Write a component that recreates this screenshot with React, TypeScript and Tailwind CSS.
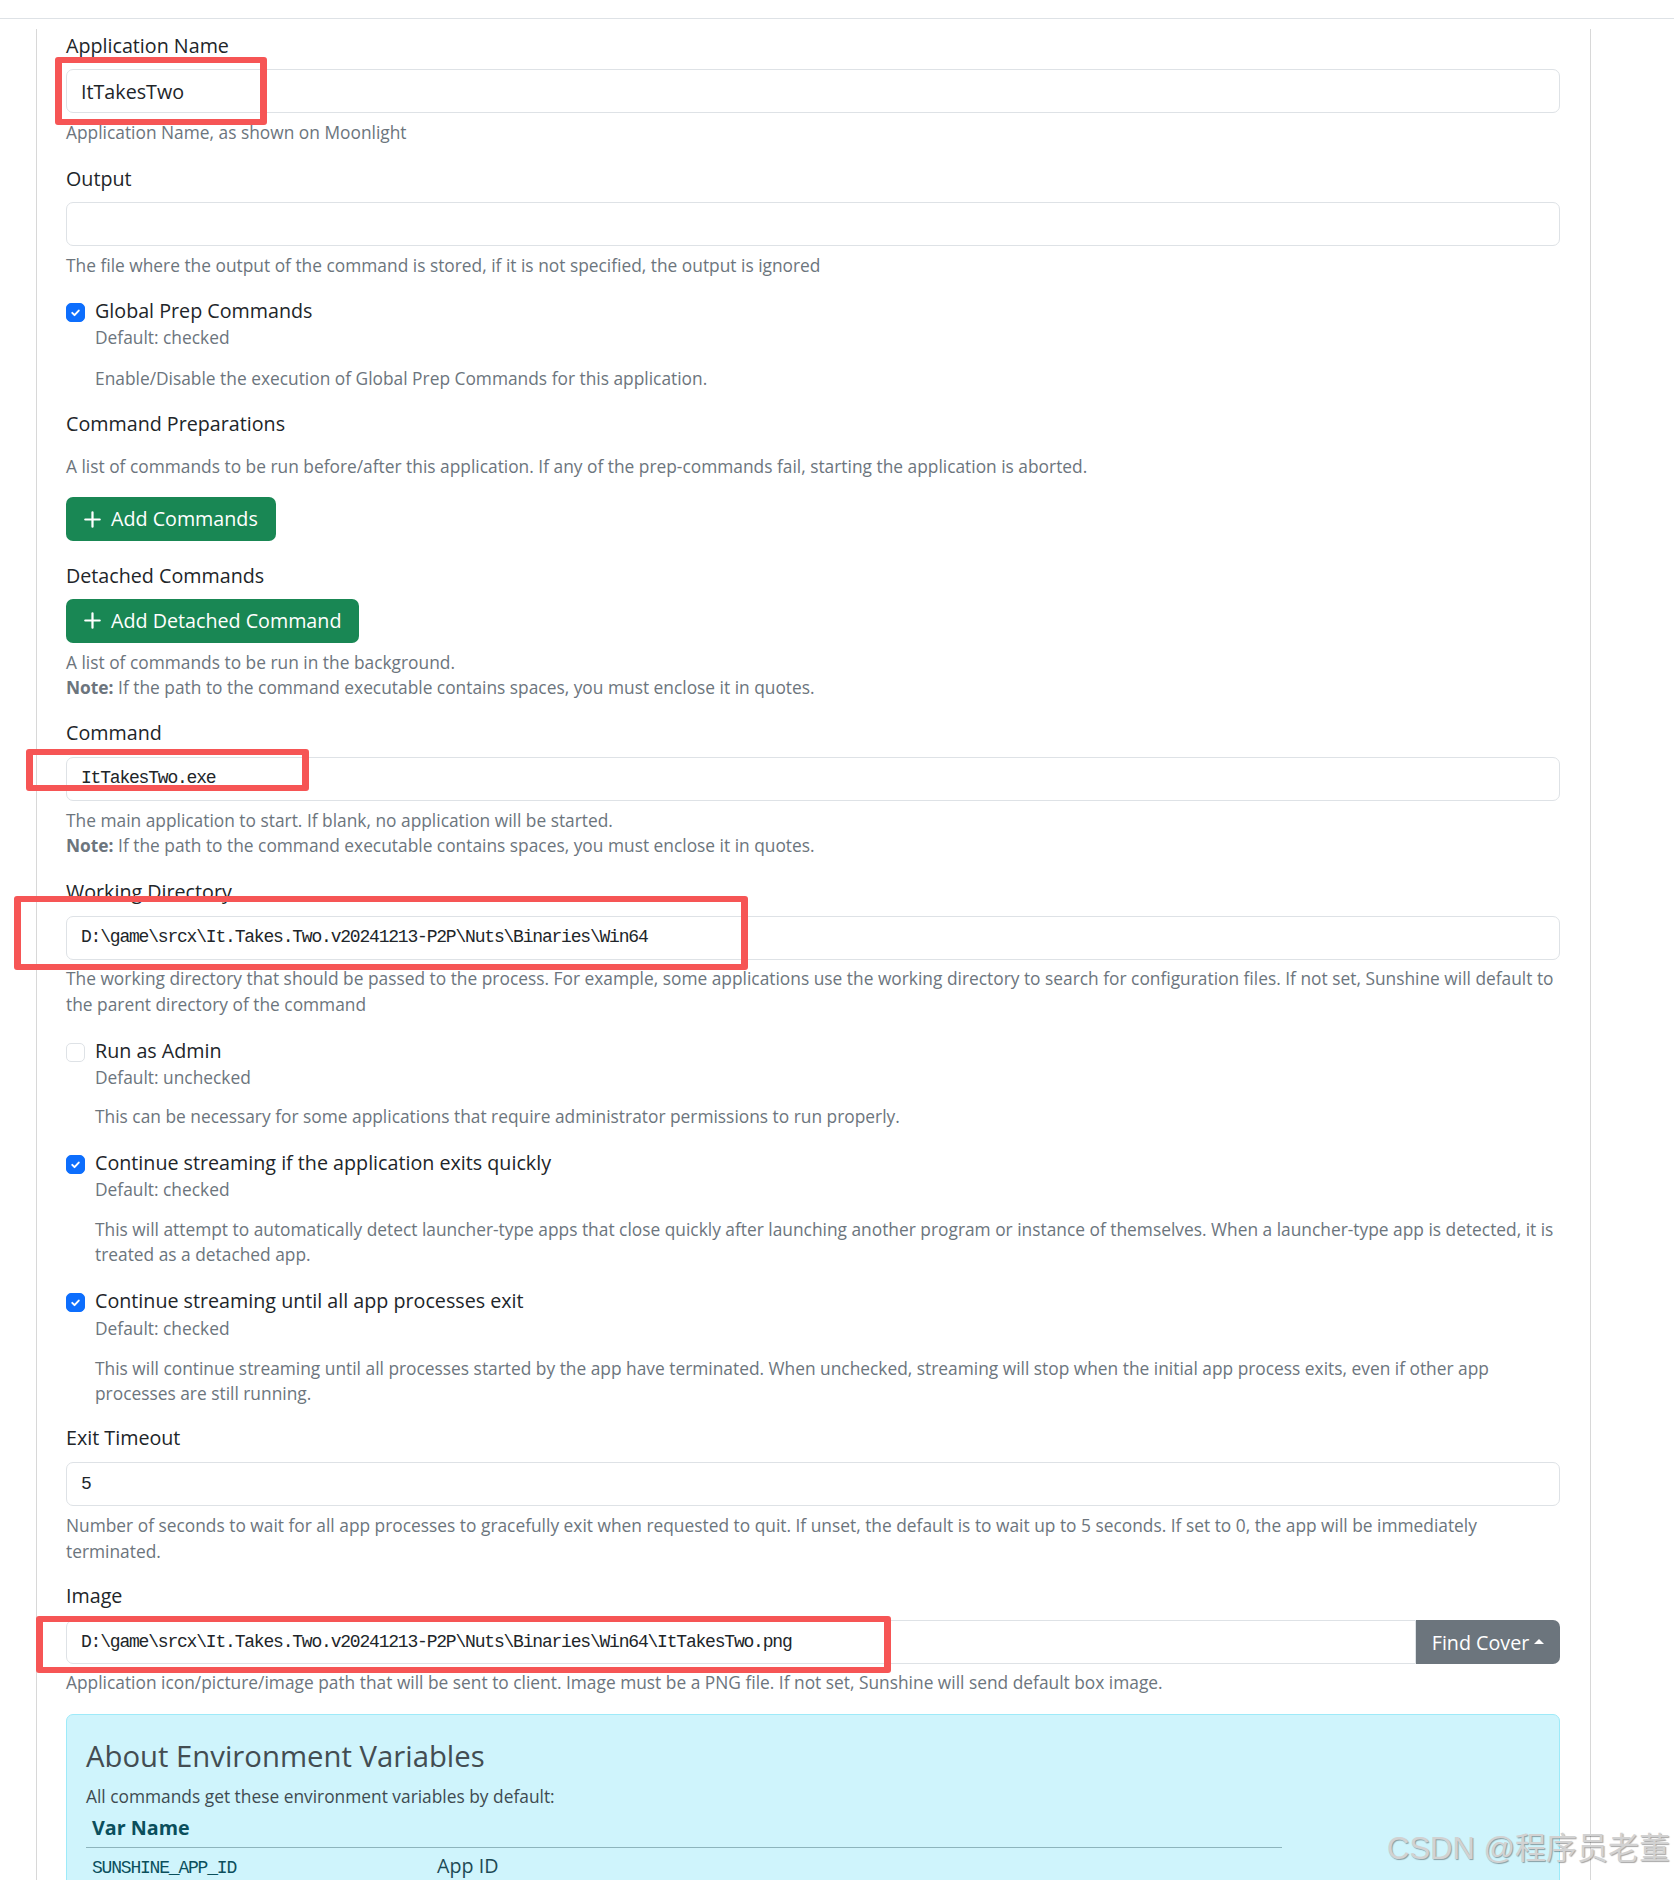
import React from "react";

function Label({ className = "", children }: { className?: string; children: React.ReactNode }) {
  return (
    <div className={`pt-[2.4px] -mb-[2.4px] text-[19.7px] leading-[28.8px] text-[#212529] whitespace-nowrap ${className}`}>
      {children}
    </div>
  );
}

function Help({ className = "", children }: { className?: string; children: React.ReactNode }) {
  return (
    <div className={`pt-[1.6px] -mb-[1.6px] text-[17.35px] leading-[25.2px] text-[#6c757d] whitespace-nowrap ${className}`}>
      {children}
    </div>
  );
}

function Field({ className = "", mono = false, value = "" }: { className?: string; mono?: boolean; value?: string }) {
  return (
    <div
      className={`h-[44px] rounded-[7px] border border-[#dee2e6] bg-white px-[14px] flex items-center text-[#212529] whitespace-nowrap ${
        mono ? "font-['Liberation_Mono',monospace] text-[18px] tracking-[-1.2px]" : "text-[19.7px]"
      } ${className}`}
    >
      {value}
    </div>
  );
}

function Check({ checked }: { checked: boolean }) {
  return (
    <span
      className={`mt-[8.4px] w-[19px] h-[19px] shrink-0 rounded-[5px] border flex items-center justify-center ${
        checked ? "bg-[#0d6efd] border-[#0d6efd]" : "bg-white border-[#dee2e6]"
      }`}
    >
      {checked && (
        <svg width="13" height="13" viewBox="0 0 20 20" fill="none">
          <path d="M5 10.5l3.5 3.5L15 7" stroke="white" strokeWidth="3" strokeLinecap="round" strokeLinejoin="round" />
        </svg>
      )}
    </span>
  );
}

function Plus() {
  return (
    <svg width="17" height="17" viewBox="0 0 16 16" fill="none">
      <path d="M8 1.2v13.6M1.2 8h13.6" stroke="white" strokeWidth="2.1" strokeLinecap="round" />
    </svg>
  );
}

function GreenButton({ className = "", children }: { className?: string; children: React.ReactNode }) {
  return (
    <div className={`inline-flex items-center h-[44px] rounded-[7px] bg-[#198754] text-white text-[19.7px] pl-[18px] pr-[18px] gap-[10px] whitespace-nowrap ${className}`}>
      <Plus />
      <span>{children}</span>
    </div>
  );
}

function RedBox({ className = "" }: { className?: string }) {
  return <div className={`absolute border-x-[7px] border-y-[6px] border-[#f65555] rounded-[3px] pointer-events-none ${className}`} />;
}

export default function App() {
  return (
    <div className="relative w-[1674px] h-[1880px] overflow-hidden bg-white font-['Open_Sans',sans-serif]">
      <div className="h-[19px] border-b border-[#dee2e6]" />
      <div className="ml-[36px] w-[1555px] h-[1900px] border-x border-[#d8d8d8] pl-[29px] pr-[30px]">
        <Label className="mt-[10.3px]">Application Name</Label>
        <Field className="mt-[11.2px]" value="ItTakesTwo" />
        <Help className="mt-[5.4px]">Application Name, as shown on Moonlight</Help>

        <Label className="mt-[19.1px]">Output</Label>
        <Field className="mt-[10.2px]" />
        <Help className="mt-[5.7px]">The file where the output of the command is stored, if it is not specified, the output is ignored</Help>

        <div className="mt-[17.8px] flex items-start gap-[10px]">
          <Check checked />
          <Label>Global Prep Commands</Label>
        </div>
        <div className="pl-[29px]">
          <Help>Default: checked</Help>
          <Help className="mt-[15.8px]">Enable/Disable the execution of Global Prep Commands for this application.</Help>
        </div>

        <Label className="mt-[18.1px]">Command Preparations</Label>
        <Help className="mt-[15.6px]">
          A list of commands to be run before/after this application. If any of the prep-commands fail, starting the application is aborted.
        </Help>
        <div className="mt-[19.7px]">
          <GreenButton className="h-[44.4px]">Add Commands</GreenButton>
        </div>

        <Label className="mt-[18.6px]">Detached Commands</Label>
        <div className="mt-[10.2px]">
          <GreenButton>Add Detached Command</GreenButton>
        </div>
        <Help className="mt-[5.4px]">
          A list of commands to be run in the background.
          <br />
          <b className="font-bold">Note:</b> If the path to the command executable contains spaces, you must enclose it in quotes.
        </Help>

        <Label className="mt-[18.2px]">Command</Label>
        <Field className="mt-[11.2px]" mono value="ItTakesTwo.exe" />
        <Help className="mt-[5.4px]">
          The main application to start. If blank, no application will be started.
          <br />
          <b className="font-bold">Note:</b> If the path to the command executable contains spaces, you must enclose it in quotes.
        </Help>

        <Label className="mt-[18.8px]">Working Directory</Label>
        <Field className="mt-[11.9px] h-[44.3px]" mono value="D:\game\srcx\It.Takes.Two.v20241213-P2P\Nuts\Binaries\Win64" />
        <Help className="mt-[5.0px]">
          The working directory that should be passed to the process. For example, some applications use the working directory to search for configuration files. If not set, Sunshine will default to
          <br />
          the parent directory of the command
        </Help>

        <div className="mt-[18.9px] flex items-start gap-[10px]">
          <Check checked={false} />
          <Label>Run as Admin</Label>
        </div>
        <div className="pl-[29px]">
          <Help>Default: unchecked</Help>
          <Help className="mt-[14.2px]">This can be necessary for some applications that require administrator permissions to run properly.</Help>
        </div>

        <div className="mt-[18.7px] flex items-start gap-[10px]">
          <Check checked />
          <Label>Continue streaming if the application exits quickly</Label>
        </div>
        <div className="pl-[29px]">
          <Help className="mt-[0.6px]">Default: checked</Help>
          <Help className="mt-[14.8px]">
            This will attempt to automatically detect launcher-type apps that close quickly after launching another program or instance of themselves. When a launcher-type app is detected, it is
            <br />
            treated as a detached app.
          </Help>
        </div>

        <div className="mt-[18.6px] flex items-start gap-[10px]">
          <Check checked />
          <Label>Continue streaming until all app processes exit</Label>
        </div>
        <div className="pl-[29px]">
          <Help className="mt-[0.5px]">Default: checked</Help>
          <Help className="mt-[14.8px]">
            This will continue streaming until all processes started by the app have terminated. When unchecked, streaming will stop when the initial app process exits, even if other app
            <br />
            processes are still running.
          </Help>
        </div>

        <Label className="mt-[16.9px]">Exit Timeout</Label>
        <Field className="mt-[12.2px] h-[44.4px]" mono value="5" />
        <Help className="mt-[5.7px]">
          Number of seconds to wait for all app processes to gracefully exit when requested to quit. If unset, the default is to wait up to 5 seconds. If set to 0, the app will be immediately
          <br />
          terminated.
        </Help>

        <Label className="mt-[16.9px]">Image</Label>
        <div className="mt-[12.2px] flex h-[44.3px]">
          <div className="flex-1 h-full rounded-l-[7px] border border-[#dee2e6] bg-white px-[14px] flex items-center text-[#212529] font-['Liberation_Mono',monospace] text-[18px] tracking-[-1.2px] whitespace-nowrap">
            D:\game\srcx\It.Takes.Two.v20241213-P2P\Nuts\Binaries\Win64\ItTakesTwo.png
          </div>
          <div className="w-[144px] h-full rounded-r-[7px] bg-[#6c757d] text-white text-[19.7px] flex items-center justify-center whitespace-nowrap">
            <span>Find Cover</span>
            <span className="ml-[5px] mb-[2px] w-0 h-0 border-x-[5.5px] border-x-transparent border-b-[5.8px] border-b-white" />
          </div>
        </div>
        <Help className="mt-[4px]">
          Application icon/picture/image path that will be sent to client. Image must be a PNG file. If not set, Sunshine will send default box image.
        </Help>

        <div className="mt-[20.1px] rounded-[7px] border border-[#9eeaf9] bg-[#cff4fc] px-[19px] pt-[22px] pb-[40px]">
          <div className="pt-[2.4px] -mb-[2.4px] text-[29.3px] leading-[34.6px] text-[#434d52] whitespace-nowrap">About Environment Variables</div>
          <div className="mt-[10.5px] pt-[2.4px] -mb-[2.4px] text-[17.35px] leading-[25.2px] text-[#3e4b50] whitespace-nowrap">
            All commands get these environment variables by default:
          </div>
          <table className="w-[1196px] border-collapse">
            <thead>
              <tr className="border-b border-[#8db4bc]">
                <th className="w-[345px] pl-[6px] pt-[7.3px] pb-[4.2px] text-left font-bold text-[19.7px] leading-[28.8px] text-[#0b4f5c]">Var Name</th>
                <th className="pl-[6px] pt-[7.3px] pb-[4.2px]" />
              </tr>
            </thead>
            <tbody>
              <tr>
                <td className="pl-[6px] pt-[3.6px] align-baseline font-['Liberation_Mono',monospace] text-[18px] tracking-[-1.2px] leading-[28.8px] text-[#0b4f5c]">
                  SUNSHINE_APP_ID
                </td>
                <td className="pl-[6px] pt-[3.6px] align-baseline text-[19.7px] leading-[28.8px] text-[#1d4a55]">App ID</td>
              </tr>
            </tbody>
          </table>
        </div>
      </div>

      <RedBox className="left-[54.7px] top-[57.3px] w-[212px] h-[68px]" />
      <RedBox className="left-[25.5px] top-[748.7px] w-[283.2px] h-[42px]" />
      <RedBox className="left-[13.8px] top-[896px] w-[734.7px] h-[74px]" />
      <RedBox className="left-[35.6px] top-[1615.7px] w-[855.9px] h-[57.6px]" />

      <div className="absolute left-[1387px] top-[1833px] text-[31px] leading-none whitespace-nowrap text-[#d2d2d2] font-['Liberation_Sans','Noto_Sans_CJK_SC',sans-serif] [text-shadow:1px_1px_1px_rgba(0,0,0,0.35)]">
        CSDN @程序员老董
      </div>
    </div>
  );
}
